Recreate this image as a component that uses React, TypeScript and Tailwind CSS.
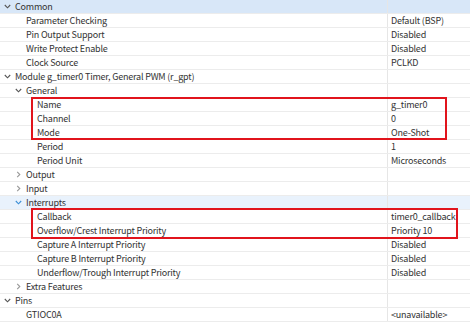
import React from "react";

type Row = {
  label: string;
  value?: string;
  level: number;
  chevron?: "down" | "right";
  highlight?: "strong" | "light";
};

const rows: Row[] = [
  { label: "Common", level: 0, chevron: "down", highlight: "strong" },
  { label: "Parameter Checking", value: "Default (BSP)", level: 1 },
  { label: "Pin Output Support", value: "Disabled", level: 1 },
  { label: "Write Protect Enable", value: "Disabled", level: 1 },
  { label: "Clock Source", value: "PCLKD", level: 1 },
  { label: "Module g_timer0 Timer, General PWM (r_gpt)", level: 0, chevron: "down" },
  { label: "General", level: 1, chevron: "down" },
  { label: "Name", value: "g_timer0", level: 2 },
  { label: "Channel", value: "0", level: 2 },
  { label: "Mode", value: "One-Shot", level: 2 },
  { label: "Period", value: "1", level: 2 },
  { label: "Period Unit", value: "Microseconds", level: 2 },
  { label: "Output", level: 1, chevron: "right" },
  { label: "Input", level: 1, chevron: "right" },
  { label: "Interrupts", level: 1, chevron: "down", highlight: "light" },
  { label: "Callback", value: "timer0_callback", level: 2 },
  { label: "Overflow/Crest Interrupt Priority", value: "Priority 10", level: 2 },
  { label: "Capture A Interrupt Priority", value: "Disabled", level: 2 },
  { label: "Capture B Interrupt Priority", value: "Disabled", level: 2 },
  { label: "Underflow/Trough Interrupt Priority", value: "Disabled", level: 2 },
  { label: "Extra Features", level: 1, chevron: "right" },
  { label: "Pins", level: 0, chevron: "down" },
  { label: "GTIOC0A", value: "<unavailable>", level: 1 },
];

function Chevron({ dir, blue }: { dir: "down" | "right"; blue?: boolean }) {
  const color = blue ? "#3b8fd6" : dir === "down" ? "#555" : "#999";
  return (
    <svg width="7" height="7" viewBox="0 0 7 7" className="shrink-0">
      {dir === "down" ? (
        <path d="M0.8 2 L3.5 4.8 L6.2 2" fill="none" stroke={color} strokeWidth="1.1" />
      ) : (
        <path d="M2.2 0.8 L4.8 3.5 L2.2 6.2" fill="none" stroke={color} strokeWidth="1.1" />
      )}
    </svg>
  );
}

export default function App() {
  return (
    <div
      className="relative w-[474px] h-[324px] bg-white overflow-hidden text-[#333333]"
      style={{ fontFamily: '"Noto Sans CJK SC", "Noto Sans", sans-serif' }}
    >
      <div className="w-[470px]">
        {rows.map((r, i) => {
          const bg =
            r.highlight === "strong"
              ? "bg-[#d8e7f8]"
              : r.highlight === "light"
              ? "bg-[#e9f2fc]"
              : "bg-white";
          return (
            <div key={i} className={`flex h-[14px] border-b border-[#ececec] ${bg}`}>
              <div className="flex items-center w-[388px] border-r border-[#e6e6e6]">
                <div
                  className={`flex items-center ${
                    r.level === 0 ? "pl-[4px]" : r.level === 1 ? "pl-[15px]" : "pl-[26px]"
                  }`}
                >
                  <div className="w-[11px] flex items-center">
                    {r.chevron && <Chevron dir={r.chevron} blue={r.highlight === "light"} />}
                  </div>
                  <span className="text-[9px] tracking-[-0.2px] leading-[13px] whitespace-nowrap">
                    {r.label}
                  </span>
                </div>
              </div>
              <div className="flex items-center pl-[3px] flex-1">
                <span className="text-[9px] tracking-[-0.2px] leading-[13px] whitespace-nowrap">
                  {r.value ?? ""}
                </span>
              </div>
            </div>
          );
        })}
      </div>
      <div className="absolute left-[31px] top-[97px] w-[416px] h-[43px] border-2 border-[#e1141c]" />
      <div className="absolute left-[31px] top-[208px] w-[427px] h-[31px] border-2 border-[#e1141c]" />
    </div>
  );
}
